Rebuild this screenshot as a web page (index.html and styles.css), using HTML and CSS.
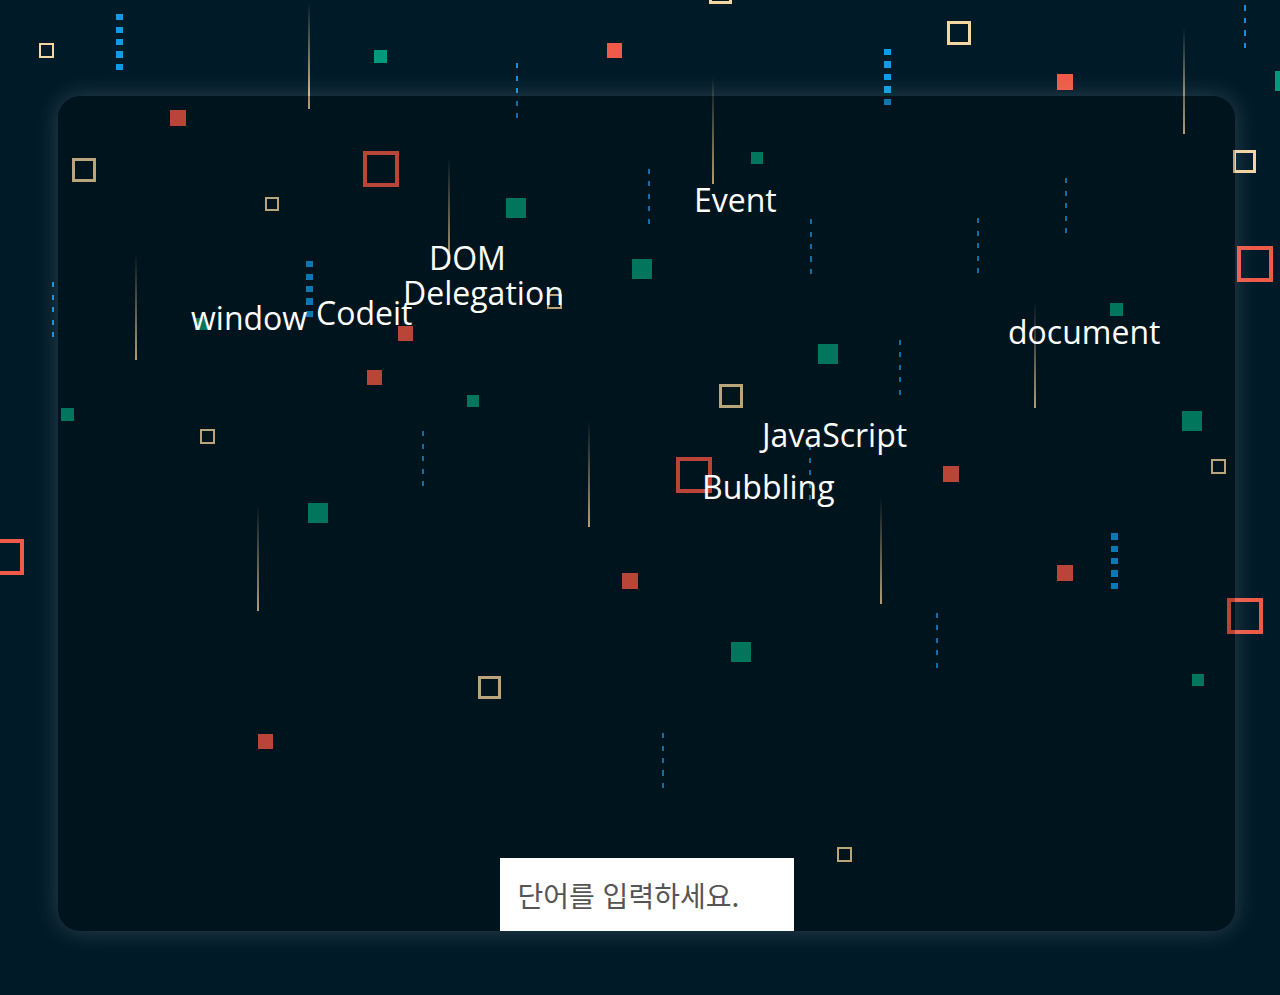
FILE: index.html
```html
<!DOCTYPE html>
<html lang="ko">
<head>
<meta charset="utf-8">
<title>Typing Rain</title>
<link rel="stylesheet" href="styles.css">
</head>
<body>
<div class="scene">
  <div class="sky" aria-hidden="true">
    <i class="sq red" style="left:170px;top:110px;--s:16px"></i>
    <i class="sq red" style="left:607px;top:43px;--s:15px"></i>
    <i class="sq red" style="left:1057px;top:74px;--s:16px"></i>
    <i class="sq red" style="left:398px;top:326px;--s:15px"></i>
    <i class="sq red" style="left:367px;top:370px;--s:15px"></i>
    <i class="sq red" style="left:943px;top:466px;--s:16px"></i>
    <i class="sq red" style="left:622px;top:573px;--s:16px"></i>
    <i class="sq red" style="left:1057px;top:565px;--s:16px"></i>
    <i class="sq red" style="left:258px;top:734px;--s:15px"></i>

    <i class="sq green" style="left:374px;top:50px;--s:13px"></i>
    <i class="sq green" style="left:751px;top:152px;--s:12px"></i>
    <i class="sq green" style="left:506px;top:198px;--s:20px"></i>
    <i class="sq green" style="left:632px;top:259px;--s:20px"></i>
    <i class="sq green" style="left:818px;top:344px;--s:20px"></i>
    <i class="sq green" style="left:1110px;top:303px;--s:13px"></i>
    <i class="sq green" style="left:195px;top:318px;--s:12px"></i>
    <i class="sq green" style="left:61px;top:408px;--s:13px"></i>
    <i class="sq green" style="left:467px;top:395px;--s:12px"></i>
    <i class="sq green" style="left:1182px;top:411px;--s:20px"></i>
    <i class="sq green" style="left:308px;top:503px;--s:20px"></i>
    <i class="sq green" style="left:731px;top:642px;--s:20px"></i>
    <i class="sq green" style="left:1192px;top:674px;--s:12px"></i>
    <i class="sq green" style="left:1275px;top:71px;--s:20px"></i>

    <i class="box beige" style="left:39px;top:43px;--s:15px"></i>
    <i class="box beige mid" style="left:709px;top:-19px;--s:23px"></i>
    <i class="box beige mid" style="left:947px;top:21px;--s:24px"></i>
    <i class="box beige mid" style="left:72px;top:158px;--s:24px"></i>
    <i class="box beige" style="left:265px;top:197px;--s:14px"></i>
    <i class="box beige" style="left:547px;top:294px;--s:15px"></i>
    <i class="box beige mid" style="left:1233px;top:150px;--s:23px"></i>
    <i class="box beige mid" style="left:719px;top:384px;--s:24px"></i>
    <i class="box beige" style="left:200px;top:429px;--s:15px"></i>
    <i class="box beige" style="left:1211px;top:459px;--s:15px"></i>
    <i class="box beige mid" style="left:478px;top:676px;--s:23px"></i>
    <i class="box beige" style="left:837px;top:847px;--s:15px"></i>

    <i class="box red big" style="left:363px;top:151px;--s:36px"></i>
    <i class="box red big" style="left:1237px;top:246px;--s:36px"></i>
    <i class="box red big" style="left:676px;top:457px;--s:36px"></i>
    <i class="box red big" style="left:-12px;top:539px;--s:36px"></i>
    <i class="box red big" style="left:1227px;top:598px;--s:36px"></i>

    <i class="dots" style="left:116px;top:14px"></i>
    <i class="dots" style="left:884px;top:49px"></i>
    <i class="dots" style="left:306px;top:261px"></i>
    <i class="dots" style="left:1111px;top:533px"></i>

    <i class="dash" style="left:516px;top:63px"></i>
    <i class="dash" style="left:1244px;top:-7px"></i>
    <i class="dash" style="left:648px;top:169px"></i>
    <i class="dash" style="left:810px;top:219px"></i>
    <i class="dash" style="left:1065px;top:178px"></i>
    <i class="dash" style="left:977px;top:218px"></i>
    <i class="dash" style="left:52px;top:282px"></i>
    <i class="dash" style="left:899px;top:340px"></i>
    <i class="dash" style="left:422px;top:431px"></i>
    <i class="dash" style="left:809px;top:445px"></i>
    <i class="dash" style="left:936px;top:613px"></i>
    <i class="dash" style="left:662px;top:733px"></i>

    <i class="trail" style="left:308px;top:2px"></i>
    <i class="trail" style="left:712px;top:77px"></i>
    <i class="trail" style="left:1183px;top:27px"></i>
    <i class="trail" style="left:448px;top:157px"></i>
    <i class="trail" style="left:135px;top:253px"></i>
    <i class="trail" style="left:1034px;top:301px"></i>
    <i class="trail" style="left:588px;top:420px"></i>
    <i class="trail" style="left:257px;top:504px"></i>
    <i class="trail" style="left:880px;top:497px"></i>
  </div>

  <main class="board">
    <span class="word" style="left:133px;top:200px">window</span>
    <span class="word" style="left:258px;top:195px">Codeit</span>
    <span class="word" style="left:371px;top:140px">DOM</span>
    <span class="word" style="left:345px;top:175px">Delegation</span>
    <span class="word" style="left:636px;top:82px">Event</span>
    <span class="word" style="left:950px;top:214px">document</span>
    <span class="word" style="left:704px;top:317px">JavaScript</span>
    <span class="word" style="left:644px;top:369px">Bubbling</span>

    <input class="answer" type="text" placeholder="단어를 입력하세요.">
  </main>
</div>
</body>
</html>
```

FILE: styles.css
```css
* { box-sizing: border-box; }

html, body {
  margin: 0;
  padding: 0;
  background: #011a28;
}

.scene {
  position: relative;
  width: 1280px;
  height: 995px;
  overflow: hidden;
  background: #011a28;
  padding: 96px 0 0 58px;
}

.sky {
  position: absolute;
  inset: 0;
}

.sky i { position: absolute; display: block; }

.sq {
  width: var(--s);
  height: var(--s);
}
.sq.red { background: #f05a48; }
.sq.green { background: #03997a; }

.box {
  width: var(--s);
  height: var(--s);
  border: 2px solid;
}
.box.mid { border-width: 3px; }
.box.big { border-width: 4px; }
.box.beige { border-color: #f3d6a2; }
.box.red { border-color: #f05a48; }

.dots {
  width: 7px;
  height: 57px;
  background: repeating-linear-gradient(to bottom, #0e9ce8 0 6.5px, transparent 6.5px 12.5px);
}

.dash {
  width: 2px;
  height: 57px;
  background: repeating-linear-gradient(to bottom, #1a8fd8 0 5px, transparent 5px 12.5px);
}

.trail {
  width: 2px;
  height: 107px;
  background: linear-gradient(to bottom, rgba(243, 214, 162, 0), rgba(243, 214, 162, 0.95));
}

.board {
  position: relative;
  z-index: 1;
  width: 1177px;
  height: 835px;
  border-radius: 22px;
  background: rgba(0, 0, 0, 0.23);
  box-shadow: 0 0 24px rgba(190, 200, 212, 0.24);
  display: flex;
  flex-direction: column;
  justify-content: flex-end;
  align-items: center;
}

.word {
  position: absolute;
  font-family: "Open Sans", "Noto Sans", sans-serif;
  font-size: 32px;
  line-height: normal;
  color: #ffffff;
  white-space: nowrap;
}

.answer {
  width: 294px;
  height: 73px;
  border: 0;
  margin: 0;
  padding: 0 18px;
  background: #ffffff;
  font-family: "Noto Sans CJK KR", "Noto Sans", sans-serif;
  font-size: 28px;
  color: #333;
  outline: none;
}
.answer::placeholder { color: #555555; }
```
